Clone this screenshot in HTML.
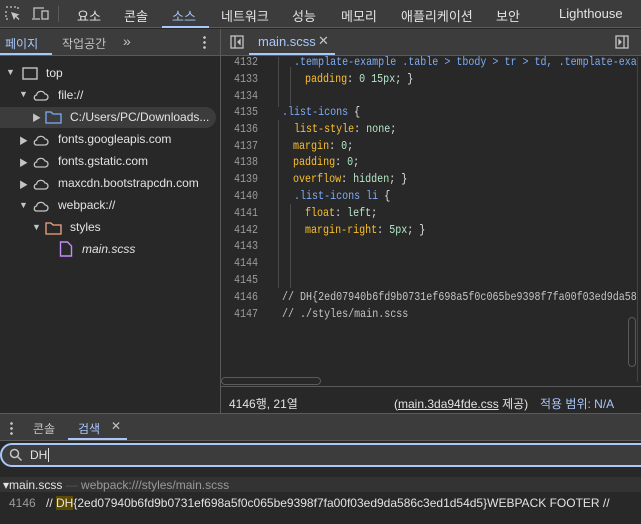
<!DOCTYPE html>
<html><head><meta charset="utf-8"><style>
*{margin:0;padding:0;box-sizing:border-box}
body{width:641px;height:524px;overflow:hidden;background:#282828;font-family:"Liberation Sans","Noto Sans CJK KR",sans-serif;font-size:12px;color:#e3e3e3;position:relative}
.a{position:absolute;white-space:nowrap}
.mono{font-family:"Liberation Mono","DejaVu Sans Mono","Noto Sans CJK KR",monospace;font-size:12px}
.mono .a{line-height:14px;transform:scaleX(0.835);transform-origin:0 0}
.mono .ln{color:#9a9a9a;width:40px;text-align:right;left:218px;transform-origin:100% 0}
.s{color:#7cacf8}.p{color:#fbc02d}.v{color:#b5e8c9}.w{color:#e3e3e3}
</style></head><body>
<div class="a" style="left:0;top:0;width:641px;height:28px;background:#3c3c3c;border-bottom:1px solid #5a5a5a"></div>
<svg class="a" style="left:5px;top:6px" width="16" height="16" viewBox="0 0 16 16" fill="none" stroke="#c4c4c4" stroke-width="1.3"><path d="M1 1h2M5 1h2M9 1h2M1 5v2M1 9v2M1 13h2M13 1v2" /><path d="M6 6l3 8 1.5-3 3 3 1-1-3-3 3-1.5z" fill="#c4c4c4" stroke="none"/></svg>
<svg class="a" style="left:32px;top:7px" width="18" height="14" viewBox="0 0 18 14" fill="none" stroke="#c4c4c4" stroke-width="1.3"><path d="M2 11V1h10M0 12h8"/><rect x="10" y="4" width="6" height="8"/></svg>
<div class="a" style="left:58px;top:6px;width:1px;height:16px;background:#5a5a5a"></div>
<div class="a" style="left:77px;top:6px;font-size:13px">요소</div>
<div class="a" style="left:124px;top:6px;font-size:13px">콘솔</div>
<div class="a" style="left:172px;top:6px;font-size:13px;color:#a8c7fa">소스</div>
<div class="a" style="left:162px;top:26px;width:47px;height:2px;background:#a8c7fa"></div>
<div class="a" style="left:221px;top:6px;font-size:13px">네트워크</div>
<div class="a" style="left:292px;top:6px;font-size:13px">성능</div>
<div class="a" style="left:341px;top:6px;font-size:13px">메모리</div>
<div class="a" style="left:401px;top:6px;font-size:13px">애플리케이션</div>
<div class="a" style="left:496px;top:6px;font-size:13px">보안</div>
<div class="a" style="left:559px;top:6px;font-size:13px">Lighthouse</div>
<div class="a" style="left:0;top:29px;width:641px;height:27px;background:#3c3c3c;border-bottom:1px solid #5a5a5a"></div>
<div class="a" style="left:220px;top:29px;width:1px;height:384px;background:#5a5a5a"></div>
<div class="a" style="left:5px;top:35px;color:#a8c7fa">페이지</div>
<div class="a" style="left:0;top:53px;width:52px;height:2px;background:#a8c7fa"></div>
<div class="a" style="left:62px;top:35px;color:#c4c4c4">작업공간</div>
<div class="a" style="left:123px;top:33px;color:#c4c4c4;font-size:14px">»</div>
<div class="a" style="left:203px;top:35px;width:3px;height:14px;background:radial-gradient(circle,#c4c4c4 1.2px,transparent 1.5px) 0 0/3px 5px"></div>
<svg class="a" style="left:230px;top:35px" width="14" height="14" viewBox="0 0 14 14" fill="none" stroke="#c4c4c4" stroke-width="1.3"><rect x="1" y="1" width="12" height="12"/><path d="M5 1v12"/><path d="M10 5l-2 2 2 2z" fill="#c4c4c4"/></svg>
<div class="a" style="left:258px;top:34px;color:#a8c7fa;font-size:13px">main.scss</div>
<div class="a" style="left:318px;top:33px;color:#c4c4c4;font-size:13px">✕</div>
<div class="a" style="left:249px;top:53px;width:86px;height:2px;background:#a8c7fa"></div>
<svg class="a" style="left:615px;top:35px" width="14" height="14" viewBox="0 0 14 14" fill="none" stroke="#c4c4c4" stroke-width="1.3"><rect x="1" y="1" width="12" height="12"/><path d="M9 1v12"/><path d="M4 5l2 2-2 2z" fill="#c4c4c4"/></svg>
<div class="a" style="left:0;top:107px;width:216px;height:21px;background:#3c3c3c;border-radius:0 11px 11px 0"></div>
<div class="a" style="left:6px;top:67px;font-size:9px;color:#c4c4c4">▼</div>
<svg class="a" style="left:22px;top:67px" width="16" height="13"><rect x="1" y="1" width="14" height="11" fill="none" stroke="#c4c4c4" stroke-width="1.4"/></svg>
<div class="a" style="left:46px;top:66px">top</div>
<svg width="0" height="0" style="position:absolute"><defs><path id="cl" d="M4 12h9a3 3 0 0 0 0-6 4.5 4.5 0 0 0-8.5 1A2.6 2.6 0 0 0 4 12z" fill="none" stroke="#c4c4c4" stroke-width="1.3"/></defs></svg>
<div class="a" style="left:19px;top:89px;font-size:9px;color:#c4c4c4">▼</div>
<svg class="a" style="left:32px;top:88px" width="18" height="14"><use href="#cl"/></svg>
<div class="a" style="left:58px;top:88px">file://</div>
<div class="a" style="left:32px;top:111px;font-size:9px;color:#c4c4c4">▶</div>
<svg class="a" style="left:45px;top:110px" width="18" height="14"><path d="M1 2h5l2 2h8v9H1z" fill="none" stroke="#7cacf8" stroke-width="1.3"/></svg>
<div class="a" style="left:70px;top:110px">C:/Users/PC/Downloads...</div>
<div class="a" style="left:19px;top:134px;font-size:9px;color:#c4c4c4">▶</div>
<svg class="a" style="left:32px;top:133px" width="18" height="14"><use href="#cl"/></svg>
<div class="a" style="left:58px;top:132px">fonts.googleapis.com</div>
<div class="a" style="left:19px;top:156px;font-size:9px;color:#c4c4c4">▶</div>
<svg class="a" style="left:32px;top:155px" width="18" height="14"><use href="#cl"/></svg>
<div class="a" style="left:58px;top:154px">fonts.gstatic.com</div>
<div class="a" style="left:19px;top:178px;font-size:9px;color:#c4c4c4">▶</div>
<svg class="a" style="left:32px;top:177px" width="18" height="14"><use href="#cl"/></svg>
<div class="a" style="left:58px;top:176px">maxcdn.bootstrapcdn.com</div>
<div class="a" style="left:19px;top:200px;font-size:9px;color:#c4c4c4">▼</div>
<svg class="a" style="left:32px;top:199px" width="18" height="14"><use href="#cl"/></svg>
<div class="a" style="left:58px;top:198px">webpack://</div>
<div class="a" style="left:32px;top:222px;font-size:9px;color:#c4c4c4">▼</div>
<svg class="a" style="left:45px;top:221px" width="18" height="14"><path d="M1 2h5l2 2h8v9H1z" fill="none" stroke="#f4a582" stroke-width="1.3"/></svg>
<div class="a" style="left:70px;top:220px">styles</div>
<svg class="a" style="left:59px;top:241px" width="14" height="16"><path d="M1.5 1h7l4 4v10h-11z" fill="none" stroke="#c58af9" stroke-width="1.4"/></svg>
<div class="a" style="left:82px;top:242px;font-style:italic">main.scss</div>
<div class="a" style="left:278px;top:57px;width:1px;height:50px;background:#4a4a4a"></div>
<div class="a" style="left:290px;top:67px;width:1px;height:38px;background:#4a4a4a"></div>
<div class="a" style="left:278px;top:120px;width:1px;height:168px;background:#4a4a4a"></div>
<div class="a" style="left:290px;top:204px;width:1px;height:84px;background:#4a4a4a"></div>
<div style="position:absolute;left:0;top:56px;width:637px;height:330px;overflow:hidden">
<div class="mono" style="position:absolute;left:0;top:-56px">
<div class="a ln" style="top:55px">4132</div><div class="a" style="left:294px;top:55px"><span class="s">.template-example .table &gt; tbody &gt; tr &gt; td, .template-example</span></div>
<div class="a ln" style="top:72px">4133</div><div class="a" style="left:305px;top:72px"><span class="p">padding</span>: <span class="v">0 15px</span>; }</div>
<div class="a ln" style="top:89px">4134</div>
<div class="a ln" style="top:105px">4135</div><div class="a" style="left:282px;top:105px"><span class="s">.list-icons</span> {</div>
<div class="a ln" style="top:122px">4136</div><div class="a" style="left:294px;top:122px"><span class="p">list-style</span>: <span class="v">none</span>;</div>
<div class="a ln" style="top:139px">4137</div><div class="a" style="left:293px;top:139px"><span class="p">margin</span>: <span class="v">0</span>;</div>
<div class="a ln" style="top:155px">4138</div><div class="a" style="left:293px;top:155px"><span class="p">padding</span>: <span class="v">0</span>;</div>
<div class="a ln" style="top:172px">4139</div><div class="a" style="left:293px;top:172px"><span class="p">overflow</span>: <span class="v">hidden</span>; }</div>
<div class="a ln" style="top:189px">4140</div><div class="a" style="left:294px;top:189px"><span class="s">.list-icons li</span> {</div>
<div class="a ln" style="top:206px">4141</div><div class="a" style="left:305px;top:206px"><span class="p">float</span>: <span class="v">left</span>;</div>
<div class="a ln" style="top:223px">4142</div><div class="a" style="left:305px;top:223px"><span class="p">margin-right</span>: <span class="v">5px</span>; }</div>
<div class="a ln" style="top:239px">4143</div>
<div class="a ln" style="top:256px">4144</div>
<div class="a ln" style="top:273px">4145</div>
<div class="a ln" style="top:290px">4146</div><div class="a" style="left:282px;top:290px;color:#c4c4c4">// DH{2ed07940b6fd9b0731ef698a5f0c065be9398f7fa00f03ed9da586c3ed1d54d5}</div>
<div class="a ln" style="top:307px">4147</div><div class="a" style="left:282px;top:307px;color:#c4c4c4">// ./styles/main.scss</div>
</div>
</div>
<div class="a" style="left:628px;top:317px;width:8px;height:50px;border:1px solid #5a5a5a;border-radius:4px;background:#282828"></div>
<div class="a" style="left:637px;top:57px;width:1px;height:325px;background:#444"></div>
<div class="a" style="left:221px;top:377px;width:100px;height:8px;border:1px solid #5a5a5a;border-radius:4px"></div>
<div class="a" style="left:221px;top:386px;width:420px;height:1px;background:#5a5a5a"></div>
<div class="a" style="left:229px;top:395px">4146행, 21열</div>
<div class="a" style="left:394px;top:395px">(<span style="text-decoration:underline">main.3da94fde.css</span> 제공)</div>
<div class="a" style="left:540px;top:395px;color:#a8c7fa">적용 범위: N/A</div>
<div class="a" style="left:0;top:413px;width:641px;height:111px;background:#282828;border-top:1px solid #5a5a5a"></div>
<div class="a" style="left:0;top:414px;width:641px;height:27px;background:#3c3c3c;border-bottom:1px solid #5a5a5a"></div>
<div class="a" style="left:10px;top:421px;width:3px;height:14px;background:radial-gradient(circle,#c4c4c4 1.2px,transparent 1.5px) 0 0/3px 5px"></div>
<div class="a" style="left:33px;top:420px;color:#c4c4c4">콘솔</div>
<div class="a" style="left:78px;top:420px;color:#a8c7fa">검색</div>
<div class="a" style="left:111px;top:419px;color:#c4c4c4;font-size:12px">✕</div>
<div class="a" style="left:68px;top:438px;width:59px;height:2px;background:#a8c7fa"></div>
<div style="position:absolute;left:0;top:443px;width:641px;height:24px;overflow:hidden">
<div class="a" style="left:0;top:0;width:660px;height:24px;border:2px solid #a8c7fa;border-radius:12px;background:#3c3c3c"></div>
</div>
<svg class="a" style="left:9px;top:448px" width="14" height="14" fill="none" stroke="#c4c4c4" stroke-width="1.5"><circle cx="5.5" cy="5.5" r="4"/><path d="M8.5 8.5l4 4"/></svg>
<div class="a" style="left:30px;top:448px">DH<span style="border-left:1px solid #e3e3e3;margin-left:1px"></span></div>
<div class="a" style="left:0;top:477px;width:641px;height:15px;background:#333"></div>
<div class="a" style="left:3px;top:478px">▾main.scss <span style="color:#555">—</span> <span style="color:#9a9a9a">webpack:///styles/main.scss</span></div>
<div class="a" style="left:9px;top:496px;color:#9a9a9a">4146</div>
<div class="a" style="left:46px;top:496px">// <span style="background:#5c4a00">DH</span>{2ed07940b6fd9b0731ef698a5f0c065be9398f7fa00f03ed9da586c3ed1d54d5}WEBPACK FOOTER //</div>
</body></html>
